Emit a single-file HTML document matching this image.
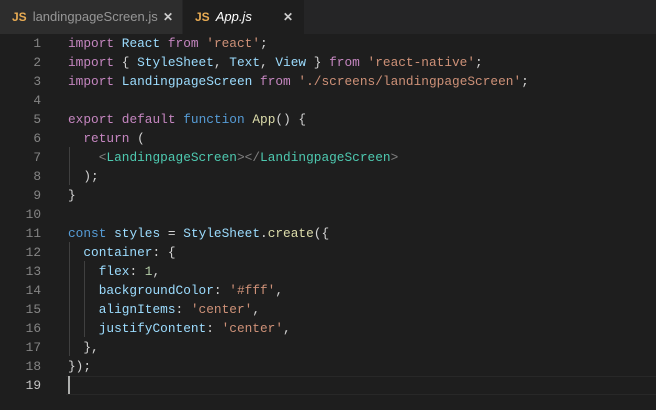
<!DOCTYPE html>
<html><head><style>
body{margin:0;width:656px;height:410px;background:#1e1e1e;overflow:hidden;position:relative;font-family:"Liberation Mono",monospace;}
.tabs{position:absolute;left:0;top:0;width:656px;height:34px;background:#252526;}
.tab{position:absolute;top:0;height:34px;font-family:"Liberation Sans",sans-serif;font-size:13px;line-height:34px;}
.js{color:#e8ab53;font-weight:bold;font-size:12px;margin-right:6px;}
.x{position:absolute;font-size:12px;font-weight:bold;}
.ln{position:absolute;left:0;width:41px;text-align:right;color:#858585;font-size:12.8px;}
.code{position:absolute;left:68px;color:#d4d4d4;font-size:12.8px;}
.l{height:19px;line-height:19px;white-space:pre;}
.k{color:#c586c0}.b{color:#569cd6}.v{color:#9cdcfe}.s{color:#ce9178}.f{color:#dcdcaa}.t{color:#4ec9b0}.g{color:#808080}.n{color:#b5cea8}
.guide{position:absolute;width:1px;background:#404040;}
</style></head><body>
<div class="tabs">
<div class="tab" style="left:0;width:182px;background:#2d2d2d;color:#969696;"><span style="margin-left:12px" class="js">JS</span>landingpageScreen.js<span class="x" style="left:163px;color:#ccc">✕</span></div>
<div class="tab" style="left:183px;width:121px;background:#1e1e1e;color:#fff;"><span style="margin-left:12px" class="js">JS</span><i>App.js</i><span class="x" style="left:100px;color:#ccc">✕</span></div>
</div>
<div style="position:absolute;left:66px;top:376px;width:590px;height:17px;border-top:1px solid #282828;border-bottom:1px solid #282828;"></div>
<div style="position:absolute;left:68px;top:376px;width:2px;height:18px;background:#aeafad"></div>
<div class="guide" style="left:69px;top:147px;height:38px"></div>
<div class="guide" style="left:69px;top:242px;height:114px"></div>
<div class="guide" style="left:84px;top:261px;height:76px"></div>
<div class="ln" style="top:34px"><div class="l">1</div><div class="l">2</div><div class="l">3</div><div class="l">4</div><div class="l">5</div><div class="l">6</div><div class="l">7</div><div class="l">8</div><div class="l">9</div><div class="l">10</div><div class="l">11</div><div class="l">12</div><div class="l">13</div><div class="l">14</div><div class="l">15</div><div class="l">16</div><div class="l">17</div><div class="l">18</div><div class="l" style="color:#c6c6c6">19</div></div>
<div class="code" style="top:34px"><div class="l"><span class="k">import</span> <span class="v">React</span> <span class="k">from</span> <span class="s">'react'</span>;</div><div class="l"><span class="k">import</span> { <span class="v">StyleSheet</span>, <span class="v">Text</span>, <span class="v">View</span> } <span class="k">from</span> <span class="s">'react-native'</span>;</div><div class="l"><span class="k">import</span> <span class="v">LandingpageScreen</span> <span class="k">from</span> <span class="s">'./screens/landingpageScreen'</span>;</div><div class="l"> </div><div class="l"><span class="k">export</span> <span class="k">default</span> <span class="b">function</span> <span class="f">App</span>() {</div><div class="l">  <span class="k">return</span> (</div><div class="l">    <span class="g">&lt;</span><span class="t">LandingpageScreen</span><span class="g">&gt;&lt;/</span><span class="t">LandingpageScreen</span><span class="g">&gt;</span></div><div class="l">  );</div><div class="l">}</div><div class="l"> </div><div class="l"><span class="b">const</span> <span class="v">styles</span> = <span class="v">StyleSheet</span>.<span class="f">create</span>({</div><div class="l">  <span class="v">container</span>: {</div><div class="l">    <span class="v">flex</span>: <span class="n">1</span>,</div><div class="l">    <span class="v">backgroundColor</span>: <span class="s">'#fff'</span>,</div><div class="l">    <span class="v">alignItems</span>: <span class="s">'center'</span>,</div><div class="l">    <span class="v">justifyContent</span>: <span class="s">'center'</span>,</div><div class="l">  },</div><div class="l">});</div></div>
</body></html>
